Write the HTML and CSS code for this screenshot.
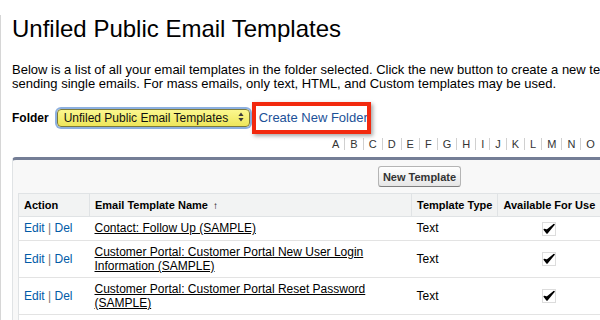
FILE: index.html
```html
<!DOCTYPE html>
<html lang="en">
<head>
    <meta charset="UTF-8">
    <title>Unfiled Public Email Templates</title>
    <link rel="stylesheet" href="styles.css">
</head>
<body>
    <div class="page">
        <h1 class="title">Unfiled Public Email Templates</h1>
        <p class="intro">Below is a list of all your email templates in the folder selected. Click the new button to create a new template. Text, HTML, Custom, and Visualforce templates may be used when<br>sending single emails. For mass emails, only text, HTML, and Custom templates may be used.</p>

        <div class="folder-row">
            <label class="folder-label" for="folder">Folder</label>
            <span class="select-wrap">
                <select id="folder" class="folder-select">
                    <option>Unfiled Public Email Templates</option>
                    <option>My Personal Email Templates</option>
                </select>
                <svg class="select-arrow" width="6" height="10" viewBox="0 0 6 10">
                    <path d="M3 0.5 L5.6 4 L0.4 4 Z M3 9.5 L5.6 6 L0.4 6 Z" fill="#3a3a3a"/>
                </svg>
            </span>
            <a class="new-folder" href="#">Create New Folder</a>
        </div>

        <div class="alpha">
            <a href="#">A</a><a href="#">B</a><a href="#">C</a><a href="#">D</a><a href="#">E</a><a href="#">F</a><a href="#">G</a><a href="#">H</a><a href="#">I</a><a href="#">J</a><a href="#">K</a><a href="#">L</a><a href="#">M</a><a href="#">N</a><a href="#">O</a><a href="#">P</a><a href="#">Q</a><a href="#">R</a><a href="#">S</a><a href="#">T</a><a href="#">U</a><a href="#">V</a><a href="#">W</a><a href="#">X</a><a href="#">Y</a><a href="#">Z</a><a href="#">Other</a><a href="#">All</a>
        </div>

        <div class="panel">
            <div class="panel-buttons">
                <button class="btn">New Template</button>
            </div>
            <table class="list">
                <thead>
                    <tr>
                        <th class="col-action">Action</th>
                        <th class="col-name">Email Template Name <span class="sort">&uarr;</span></th>
                        <th class="col-type">Template Type</th>
                        <th class="col-avail">Available For Use</th>
                        <th>Description</th>
                    </tr>
                </thead>
                <tbody>
                    <tr>
                        <td><a class="act" href="#">Edit</a> <span class="pipe">|</span> <a class="act" href="#">Del</a></td>
                        <td><a class="name" href="#">Contact: Follow Up (SAMPLE)</a></td>
                        <td>Text</td>
                        <td class="center"><svg class="check" width="14" height="14" viewBox="0 0 14 14"><rect x="0.5" y="0.5" width="13" height="13" fill="none" stroke="#b9b9b9" stroke-dasharray="1 1"/><path d="M2.3 7.6 L5 11 L12 2.6 L5.2 8.2 Z" fill="#000" stroke="#000" stroke-width="1.6" stroke-linejoin="round"/></svg></td>
                        <td></td>
                    </tr>
                    <tr>
                        <td><a class="act" href="#">Edit</a> <span class="pipe">|</span> <a class="act" href="#">Del</a></td>
                        <td><a class="name" href="#">Customer Portal: Customer Portal New User Login Information (SAMPLE)</a></td>
                        <td>Text</td>
                        <td class="center"><svg class="check" width="14" height="14" viewBox="0 0 14 14"><rect x="0.5" y="0.5" width="13" height="13" fill="none" stroke="#b9b9b9" stroke-dasharray="1 1"/><path d="M2.3 7.6 L5 11 L12 2.6 L5.2 8.2 Z" fill="#000" stroke="#000" stroke-width="1.6" stroke-linejoin="round"/></svg></td>
                        <td></td>
                    </tr>
                    <tr>
                        <td><a class="act" href="#">Edit</a> <span class="pipe">|</span> <a class="act" href="#">Del</a></td>
                        <td><a class="name" href="#">Customer Portal: Customer Portal Reset Password (SAMPLE)</a></td>
                        <td>Text</td>
                        <td class="center"><svg class="check" width="14" height="14" viewBox="0 0 14 14"><rect x="0.5" y="0.5" width="13" height="13" fill="none" stroke="#b9b9b9" stroke-dasharray="1 1"/><path d="M2.3 7.6 L5 11 L12 2.6 L5.2 8.2 Z" fill="#000" stroke="#000" stroke-width="1.6" stroke-linejoin="round"/></svg></td>
                        <td></td>
                    </tr>
                    <tr>
                        <td><a class="act" href="#">Edit</a> <span class="pipe">|</span> <a class="act" href="#">Del</a></td>
                        <td><a class="name" href="#">Customer Portal: Forgot Password (SAMPLE)</a></td>
                        <td>Text</td>
                        <td class="center"></td>
                        <td></td>
                    </tr>
                </tbody>
            </table>
        </div>
    </div>
</body>
</html>
```

FILE: styles.css
```css
body {
    margin: 0;
    overflow: hidden;
    background: #fff;
    font-family: "Liberation Sans", Arial, sans-serif;
    color: #000;
}

.page {
    width: 1300px;
    padding-left: 11px;
    border-left: 1px solid #d6d6d6;
    min-height: 320px;
}

.title {
    margin: 15px 0 0;
    font-size: 24px;
    line-height: 28px;
    font-weight: normal;
}

.intro {
    margin: 20px 0 0;
    font-size: 13px;
    line-height: 14px;
}

/* folder picker */
.folder-row {
    display: flex;
    align-items: center;
    margin-top: 16px;
    height: 21px;
}

.folder-label {
    font-size: 12px;
    font-weight: bold;
    margin-right: 8px;
}

.select-wrap {
    position: relative;
    display: inline-block;
}

.folder-select {
    appearance: none;
    -webkit-appearance: none;
    width: 193px;
    height: 18px;
    padding: 0 0 0 6px;
    border: 1px solid #7c7a3a;
    border-radius: 4px;
    background: linear-gradient(#fbf78f, #eee65a);
    box-shadow: 0 0 0 2px #8db0e0;
    font-family: "Liberation Sans", Arial, sans-serif;
    font-size: 12px;
    color: #111;
    outline: none;
}

.select-arrow {
    position: absolute;
    right: 6px;
    top: 4px;
    pointer-events: none;
}

.new-folder {
    position: relative;
    margin-left: 9px;
    font-size: 13px;
    line-height: 15px;
    color: #1c5198;
    text-decoration: none;
}

/* red callout drawn over the link */
.new-folder::after {
    content: "";
    position: absolute;
    left: -7px;
    right: -3px;
    top: -8px;
    bottom: -9px;
    border: 4px solid #f2290e;
    box-shadow: 2px 2px 4px rgba(0, 0, 0, 0.35);
}

/* alphabet filter */
.alpha {
    margin-top: 9px;
    padding-left: 315px;
    font-size: 11px;
    line-height: 14px;
    white-space: nowrap;
}

.alpha a {
    color: #333;
    text-decoration: none;
    padding: 0 5px;
    border-left: 1px solid #d0d0d0;
}

.alpha a:first-child {
    border-left: none;
}

/* list panel */
.panel {
    width: 813px;
    margin-top: 6px;
    background: #f8f8f8;
    border-top: 3px solid #747e96;
    border-left: 1px solid #e0e3e5;
    border-right: 1px solid #e0e3e5;
    border-top-left-radius: 4px;
    padding: 0 5px 10px;
}

.panel-buttons {
    text-align: center;
    padding: 6px 10px 6px 0;
}

.btn {
    height: 21px;
    padding: 0 4px;
    font-family: "Liberation Sans", Arial, sans-serif;
    font-size: 11px;
    font-weight: bold;
    color: #333;
    background: linear-gradient(#fff, #e6e6e6);
    border: 1px solid #b5b5b5;
    border-bottom-color: #7f7f7f;
    border-radius: 3px;
}

.list {
    width: 803px;
    border-collapse: collapse;
    background: #fff;
    border: 1px solid #e0e3e5;
    font-size: 12px;
}

.list th {
    text-align: left;
    font-size: 11px;
    font-weight: bold;
    background: #f2f3f3;
    padding: 5px 5px 4px;
    line-height: 13px;
    border-bottom: 1px solid #e0e3e5;
    border-left: 1px solid #e0e3e5;
    white-space: nowrap;
}

.list th:first-child {
    border-left: none;
}

.col-action { width: 60px; }
.col-name { width: 311px; }
.col-type { width: 75px; }
.col-avail { width: 89px; }

.sort {
    font-weight: normal;
    font-size: 10px;
    margin-left: 2px;
}

.list td {
    padding: 4px 5px;
    line-height: 14px;
    border-bottom: 1px solid #e3e3e3;
    vertical-align: middle;
}

.list td.center {
    text-align: center;
}

.act {
    color: #015ba7;
    text-decoration: none;
}

.pipe {
    color: #777;
}

.name {
    color: #000;
    text-decoration: underline;
}

.check {
    display: inline-block;
    vertical-align: middle;
}
```
